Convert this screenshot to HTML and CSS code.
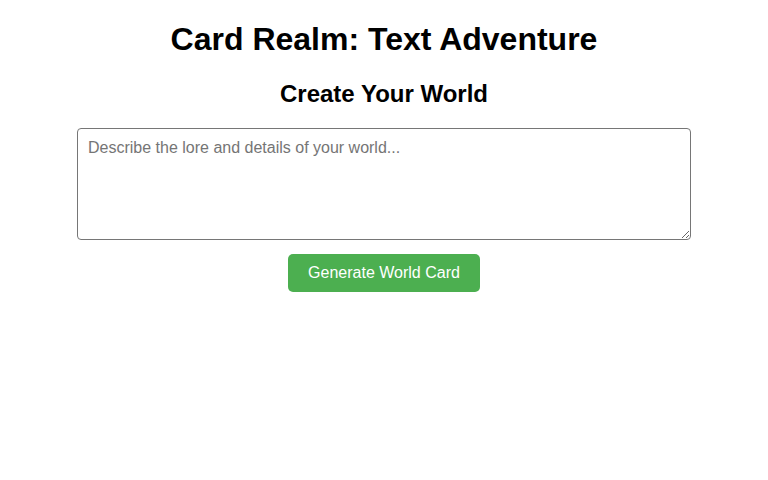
FILE: index.html
```html
<!DOCTYPE html>
<html>
<head>
  <title>Card Realm: Text Adventure</title>
  <link rel="stylesheet" href="styles.css">
</head>

<body>
  <h1>Card Realm: Text Adventure</h1>

  <main id="world-setup">
    <h2>Create Your World</h2>
    <textarea id="world-lore" placeholder="Describe the lore and details of your world..."></textarea>
    <button id="generate-btn">Generate World Card</button>
  </main>
</body>
</html>
```

FILE: styles.css
```css
body {
  font-family: 'Liberation Sans', Arial, sans-serif;
  margin: 0;
  padding: 0 8px;
  background-color: #FFFFFF;
  color: #000000;
  text-align: center;
}

h1 {
  font-size: 32px;
  margin: 21px 0 22px;
}

h2 {
  font-size: 24px;
  margin: 0 0 20px;
}

#world-setup {
  display: flex;
  flex-direction: column;
  align-items: center;
}

textarea {
  display: block;
  box-sizing: border-box;
  width: 614px;
  height: 112px;
  padding: 10px;
  font-family: 'Liberation Sans', Arial, sans-serif;
  font-size: 16px;
  border: 1px solid #767676;
  border-radius: 4px;
  resize: vertical;
}

textarea::placeholder {
  color: #757575;
}

button {
  font-family: 'Liberation Sans', Arial, sans-serif;
  font-size: 16px;
  background-color: #4CAF50;
  color: #FFFFFF;
  border: none;
  padding: 10px 20px;
  margin-top: 14px;
  border-radius: 5px;
  cursor: pointer;
}

button:hover {
  background-color: #45A049;
}
```
